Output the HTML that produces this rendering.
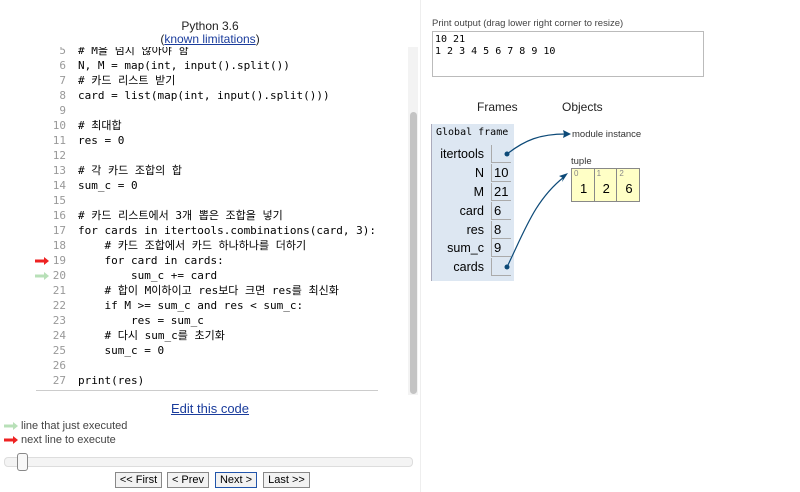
<!DOCTYPE html>
<html><head><meta charset="utf-8"><style>
body{margin:0;width:800px;height:492px;background:#fff;font-family:"Liberation Sans","Noto Sans CJK KR",sans-serif;position:relative;overflow:hidden;color:#000}
.a{position:absolute}
.code{position:absolute;left:0;top:47px;width:406px;height:345px;overflow:hidden;font-family:"DejaVu Sans Mono","Noto Sans CJK KR",monospace;font-size:11px}
.ln{position:absolute;left:36px;width:30px;text-align:right;color:#999;line-height:15px;height:15px}
.tx{position:absolute;left:78px;white-space:pre;line-height:15px;height:15px}
.lab{position:absolute;right:1px;text-align:right;font-size:12.5px}
.val{position:absolute;left:491px;width:17px;height:17px;border-left:1px solid #aaa;border-bottom:1px solid #aaa;font-size:13px;padding-left:2px;line-height:17px}
</style></head><body>
<div class="a" style="left:0;width:420px;top:19px;text-align:center;font-size:12px;color:#222">Python 3.6</div>
<div class="a" style="left:0;width:420px;top:32px;text-align:center;font-size:12px;color:#222">(<span style="color:#1a3c9c;text-decoration:underline">known limitations</span>)</div>
<div class="code" id="c"></div>
<div class="a" style="left:36px;top:390px;width:342px;height:1px;background:#ccc"></div>
<div class="a" style="left:408px;top:47px;width:10px;height:348px;background:#f3f3f3"></div>
<div class="a" style="left:410px;top:112px;width:7px;height:282px;background:#c4c4c4;border-radius:4px"></div>
<div class="a" style="left:420px;top:0;width:1px;height:492px;background:#eee"></div>
<div class="a" style="left:0;width:420px;top:401px;text-align:center;font-size:13px;color:#1a3c9c;text-decoration:underline">Edit this code</div>
<svg class="a" style="left:4px;top:421px" width="16" height="26"><path d="M0 5H10" stroke="#b8e0b8" stroke-width="3"/><path d="M9 1L14 5L9 9Z" fill="#b8e0b8"/><path d="M0 19H10" stroke="#e22" stroke-width="3"/><path d="M9 15L14 19L9 23Z" fill="#e22"/></svg>
<div class="a" style="left:21px;top:420px;font-size:11px;color:#444">line that just executed</div>
<div class="a" style="left:21px;top:434px;font-size:11px;color:#444">next line to execute</div>
<div class="a" style="left:4px;top:457px;width:407px;height:8px;border:1px solid #ddd;border-radius:4px;background:#f4f4f4"></div>
<div class="a" style="left:17px;top:453px;width:9px;height:16px;border:1px solid #888;border-radius:3px;background:#f8f8f8"></div>
<div class="a" style="left:115px;top:472px;width:45px;height:14px;border:1px solid #888;font-size:11px;text-align:center;line-height:14px;background:#f2f2f2">&lt;&lt; First</div>
<div class="a" style="left:167px;top:472px;width:40px;height:14px;border:1px solid #888;font-size:11px;text-align:center;line-height:14px;background:#f2f2f2">&lt; Prev</div>
<div class="a" style="left:215px;top:472px;width:40px;height:14px;border:1px solid #2255aa;font-size:11px;text-align:center;line-height:14px;background:#f2f2f2">Next &gt;</div>
<div class="a" style="left:263px;top:472px;width:45px;height:14px;border:1px solid #888;font-size:11px;text-align:center;line-height:14px;background:#f2f2f2">Last &gt;&gt;</div>
<div class="a" style="left:432px;top:18px;font-size:9.5px;color:#444">Print output (drag lower right corner to resize)</div>
<div class="a" style="left:432px;top:31px;width:268px;height:42px;border:1px solid #bbb;font-family:'DejaVu Sans Mono',monospace;font-size:10px;line-height:12px;padding:2px 0 0 2px">10 21<br>1 2 3 4 5 6 7 8 9 10</div>
<div class="a" style="left:477px;top:100px;font-size:12px;color:#222">Frames</div>
<div class="a" style="left:562px;top:100px;font-size:12px;color:#222">Objects</div>
<div class="a" style="left:431px;top:124px;width:82px;height:157px;background:#dde7f2;border-left:1px solid #aab"></div>
<div class="a" style="left:436px;top:127px;font-family:'DejaVu Sans Mono',monospace;font-size:10px">Global frame</div>
<div class="a" style="left:431px;width:54px;top:145px;height:140px">
<div class="lab" style="top:2px">itertools</div><div class="lab" style="top:21px">N</div><div class="lab" style="top:40px">M</div><div class="lab" style="top:59px">card</div><div class="lab" style="top:78px">res</div><div class="lab" style="top:96px">sum_c</div><div class="lab" style="top:115px">cards</div></div>
<div class="val" style="top:145px"></div><div class="val" style="top:164px">10</div><div class="val" style="top:183px">21</div><div class="val" style="top:202px">6</div><div class="val" style="top:221px">8</div><div class="val" style="top:239px">9</div><div class="val" style="top:258px"></div>
<div class="a" style="left:572px;top:129px;font-size:9.5px;color:#333">module instance</div>
<div class="a" style="left:571px;top:156px;font-size:9.5px;color:#333">tuple</div>
<div class="a" style="left:571px;top:168px;width:67px;height:32px;background:#ffffc6;border:1px solid #888;display:flex">
<div style="flex:1;border-right:1px solid #888;position:relative"><span style="position:absolute;left:2px;top:0;font-size:8px;color:#888">0</span><span style="position:absolute;left:8px;top:12px;font-size:13px">1</span></div>
<div style="flex:1;border-right:1px solid #888;position:relative"><span style="position:absolute;left:2px;top:0;font-size:8px;color:#888">1</span><span style="position:absolute;left:8px;top:12px;font-size:13px">2</span></div>
<div style="flex:1;position:relative"><span style="position:absolute;left:2px;top:0;font-size:8px;color:#888">2</span><span style="position:absolute;left:8px;top:12px;font-size:13px">6</span></div></div>
<svg class="a" style="left:0;top:0" width="800" height="492">
<g stroke="#0d4a78" stroke-width="1.2" fill="none"><path d="M507 154C525 140 540 134 566 134"/><path d="M507 267C525 230 535 200 564 177"/></g>
<g fill="#0d4a78"><circle cx="507" cy="154" r="2.5"/><circle cx="507" cy="267" r="2.5"/><path d="M571 134L563 130L564 134L563 138Z"/><path d="M568 173L559 176L563 178L562 182Z"/></g></svg>
<script>
var L=[[5,"# M을 넘지 않아야 함"],[6,"N, M = map(int, input().split())"],[7,"# 카드 리스트 받기"],[8,"card = list(map(int, input().split()))"],[9,""],[10,"# 최대합"],[11,"res = 0"],[12,""],[13,"# 각 카드 조합의 합"],[14,"sum_c = 0"],[15,""],[16,"# 카드 리스트에서 3개 뽑은 조합을 넣기"],[17,"for cards in itertools.combinations(card, 3):"],[18,"    # 카드 조합에서 카드 하나하나를 더하기"],[19,"    for card in cards:"],[20,"        sum_c += card"],[21,"    # 합이 M이하이고 res보다 크면 res를 최신화"],[22,"    if M >= sum_c and res < sum_c:"],[23,"        res = sum_c"],[24,"    # 다시 sum_c를 초기화"],[25,"    sum_c = 0"],[26,""],[27,"print(res)"]];
var h="";L.forEach(function(l,i){var t=i*15-4;h+='<div class="ln" style="top:'+t+'px">'+l[0]+'</div><div class="tx" style="top:'+t+'px">'+l[1].replace(/</g,"&lt;")+'</div>';});
h+='<svg style="position:absolute;left:35px;top:209px" width="16" height="26"><path d="M0 5H10" stroke="#e22" stroke-width="3"/><path d="M9 1L14 5L9 9Z" fill="#e22"/><path d="M0 20H10" stroke="#b8e0b8" stroke-width="3"/><path d="M9 16L14 20L9 24Z" fill="#b8e0b8"/></svg>';
document.getElementById("c").innerHTML=h;
</script>
</body></html>
